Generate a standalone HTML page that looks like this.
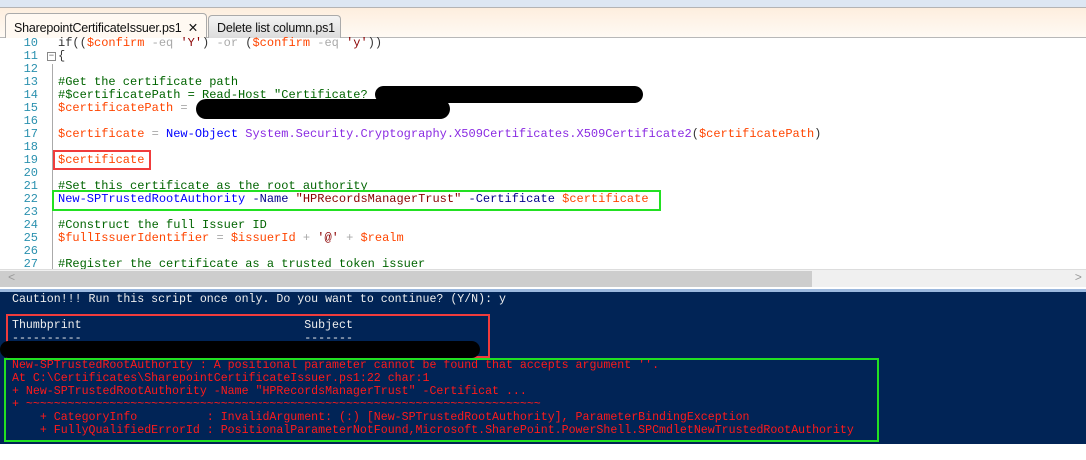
<!DOCTYPE html>
<html><head><style>
*{margin:0;padding:0;box-sizing:border-box}
body{width:1086px;height:460px;position:relative;overflow:hidden;background:#fff;font-family:"Liberation Mono",monospace}
.abs{position:absolute}
.top{left:0;top:0;width:1086px;height:8px;background:#dde7f3;border-bottom:1px solid #b4b4b4}
.strip{left:0;top:8px;width:1086px;height:30px;background:linear-gradient(#fdeede,#fffaf4);border-bottom:1px solid #b8b8b8}
.tab1{left:5px;top:13px;width:202px;height:25px;background:#fff9f2;border:1px solid #aaa;border-bottom:none;border-radius:4px 4px 0 0;font:12.5px "Liberation Sans",sans-serif;padding:6px 0 0 8px;color:#111;white-space:nowrap;letter-spacing:-0.2px}
.tab2{left:208px;top:15px;width:133px;height:23px;background:linear-gradient(#f4f4f4,#dcdcdc);border:1px solid #aaa;border-bottom:none;border-radius:4px 4px 0 0;font:12.5px "Liberation Sans",sans-serif;padding:5px 0 0 8px;color:#111;white-space:nowrap;letter-spacing:-0.2px}
.ln{left:0;width:38px;text-align:right;font-size:12px;color:#2b91af;line-height:13px}
.code{left:58px;font-size:12px;line-height:13px;white-space:pre;color:#333}
.gut{left:52px;top:64px;width:1px;height:206px;background:#aaa}
.c{color:#006400}.v{color:#ff4500}.k{color:#00008b}.cm{color:#0000ff}.t{color:#8a2be2}.s{color:#8b0000}.o{color:#a9a9a9}
.hs{left:0;top:269px;width:1086px;height:18px;background:#f0f0f0;border-top:1px solid #ddd}
.con{left:0;top:289px;width:1086px;height:155px;background:#012456;border-top:3px solid #9bb8de}
.ct{left:12px;font-size:11.6px;line-height:13px;white-space:pre;color:#eee}
.r{color:#ff1a1a}
.blob{background:#000;border-radius:10px}
</style></head><body>
<div class="abs top"></div>
<div class="abs strip"></div>
<div class="abs tab1">SharepointCertificateIssuer.ps1 <span style="margin-left:3px">✕</span></div>
<div class="abs tab2">Delete list column.ps1</div>
<div class="abs ln" style="top:37px">10<br>11<br>12<br>13<br>14<br>15<br>16<br>17<br>18<br>19<br>20<br>21<br>22<br>23<br>24<br>25<br>26<br>27</div>
<div class="abs" style="left:47px;top:52px;width:9px;height:9px;border:1px solid #888;font-size:9px;line-height:7px;text-align:center;color:#555;background:#fff">−</div>
<div class="abs gut"></div>
<div class="abs code" style="top:37px">if((<span class="v">$confirm</span> <span class="o">-eq</span> <span class="s">'Y'</span>) <span class="o">-or</span> (<span class="v">$confirm</span> <span class="o">-eq</span> <span class="s">'y'</span>))
{

<span class="c">#Get the certificate path</span>
<span class="c">#$certificatePath = Read-Host "Certificate? </span>
<span class="v">$certificatePath</span> <span class="o">=</span>

<span class="v">$certificate</span> <span class="o">=</span> <span class="cm">New-Object</span> <span class="t">System.Security.Cryptography.X509Certificates.X509Certificate2</span>(<span class="v">$certificatePath</span>)

<span class="v">$certificate</span>

<span class="c">#Set this certificate as the root authority</span>
<span class="cm">New-SPTrustedRootAuthority</span> <span class="k">-Name</span> <span class="s">"HPRecordsManagerTrust"</span> <span class="k">-Certificate</span> <span class="v">$certificate</span>

<span class="c">#Construct the full Issuer ID</span>
<span class="v">$fullIssuerIdentifier</span> <span class="o">=</span> <span class="v">$issuerId</span> <span class="o">+</span> <span class="s">'@'</span> <span class="o">+</span> <span class="v">$realm</span>

<span class="c">#Register the certificate as a trusted token issuer</span></div>
<div class="abs blob" style="left:375px;top:86px;width:268px;height:17px"></div>
<div class="abs blob" style="left:196px;top:99px;width:254px;height:20px"></div>
<div class="abs" style="left:53px;top:150px;width:98px;height:20px;border:2px solid #f03c3c"></div>
<div class="abs" style="left:52px;top:190px;width:609px;height:21px;border:2px solid #22e022"></div>
<div class="abs hs"><div class="abs" style="left:0;top:1px;width:812px;height:16px;background:#cdcdcd"></div><span class="abs" style="left:8px;top:1px;color:#999;font-size:12px">&lt;</span><span class="abs" style="right:4px;top:1px;color:#999;font-size:12px">&gt;</span></div>
<div class="abs con"></div>
<div class="abs ct" style="top:293px">Caution!!! Run this script once only. Do you want to continue? (Y/N): y</div>
<div class="abs ct" style="top:319px">Thumbprint                                Subject
----------                                -------</div>
<div class="abs ct r" style="top:359px">New-SPTrustedRootAuthority : A positional parameter cannot be found that accepts argument ''.
At C:\Certificates\SharepointCertificateIssuer.ps1:22 char:1
+ New-SPTrustedRootAuthority -Name "HPRecordsManagerTrust" -Certificat ...
+ ~~~~~~~~~~~~~~~~~~~~~~~~~~~~~~~~~~~~~~~~~~~~~~~~~~~~~~~~~~~~~~~~~~~~~~~~~~
    + CategoryInfo          : InvalidArgument: (:) [New-SPTrustedRootAuthority], ParameterBindingException
    + FullyQualifiedErrorId : PositionalParameterNotFound,Microsoft.SharePoint.PowerShell.SPCmdletNewTrustedRootAuthority</div>
<div class="abs" style="left:6px;top:314px;width:484px;height:44px;border:2px solid #f03c3c"></div>
<div class="abs" style="left:4px;top:358px;width:875px;height:84px;border:2px solid #22e022"></div>
<div class="abs blob" style="left:0;top:341px;width:480px;height:17px"></div>
</body></html>
